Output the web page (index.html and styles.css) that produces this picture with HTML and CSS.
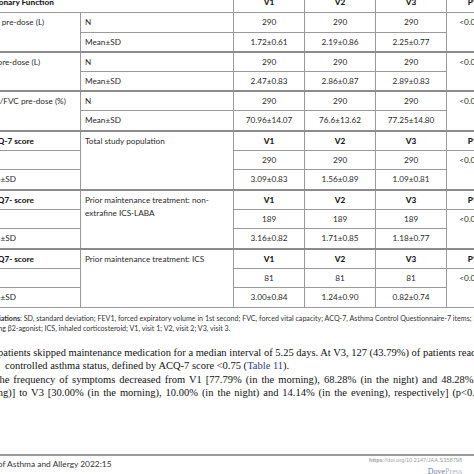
FILE: index.html
```html
<!DOCTYPE html>
<html>
<head>
<meta charset="utf-8">
<link rel="stylesheet" href="styles.css">
</head>
<body>
<div class="page">
  <table class="data">
    <colgroup>
      <col class="c1"><col class="c2"><col class="cv"><col class="cv"><col class="cv"><col class="cp">
    </colgroup>
    <tr class="head">
      <th colspan="2" class="left">Pulmonary Function</th><th>V1</th><th>V2</th><th>V3</th><th>P*</th>
    </tr>
    <tr>
      <td rowspan="2" class="left">FEV1 pre-dose (L)</td><td class="left">N</td><td>290</td><td>290</td><td>290</td><td rowspan="2">&lt;0.001</td>
    </tr>
    <tr>
      <td class="left">Mean±SD</td><td>1.72±0.61</td><td>2.19±0.86</td><td>2.25±0.77</td>
    </tr>
    <tr class="sec">
      <td rowspan="2" class="left">FVC pre-dose (L)</td><td class="left">N</td><td>290</td><td>290</td><td>290</td><td rowspan="2">&lt;0.001</td>
    </tr>
    <tr>
      <td class="left">Mean±SD</td><td>2.47±0.83</td><td>2.86±0.87</td><td>2.89±0.83</td>
    </tr>
    <tr class="sec">
      <td rowspan="2" class="left">FEV1/FVC pre-dose (%)</td><td class="left">N</td><td>290</td><td>290</td><td>290</td><td rowspan="2">&lt;0.001</td>
    </tr>
    <tr>
      <td class="left">Mean±SD</td><td>70.96±14.07</td><td>76.6±13.62</td><td>77.25±14.80</td>
    </tr>
    <tr class="sec">
      <th class="left ind">ACQ-7 score</th><td rowspan="3" class="left">Total study population</td><th>V1</th><th>V2</th><th>V3</th><th>P*</th>
    </tr>
    <tr>
      <td class="left">N</td><td>290</td><td>290</td><td>290</td><td rowspan="2">&lt;0.001</td>
    </tr>
    <tr>
      <td class="left">Mean±SD</td><td>3.09±0.83</td><td>1.56±0.89</td><td>1.09±0.81</td>
    </tr>
    <tr class="sec">
      <th class="left ind">ACQ7- score</th><td rowspan="3" class="left">Prior maintenance treatment: non-<br>extrafine ICS-LABA</td><th>V1</th><th>V2</th><th>V3</th><th>P*</th>
    </tr>
    <tr>
      <td class="left">N</td><td>189</td><td>189</td><td>189</td><td rowspan="2">&lt;0.001</td>
    </tr>
    <tr>
      <td class="left">Mean±SD</td><td>3.16±0.82</td><td>1.71±0.85</td><td>1.18±0.77</td>
    </tr>
    <tr class="sec">
      <th class="left ind">ACQ7- score</th><td rowspan="3" class="left">Prior maintenance treatment: ICS</td><th>V1</th><th>V2</th><th>V3</th><th>P*</th>
    </tr>
    <tr>
      <td class="left">N</td><td>81</td><td>81</td><td>81</td><td rowspan="2">&lt;0.001</td>
    </tr>
    <tr>
      <td class="left">Mean±SD</td><td>3.00±0.84</td><td>1.24±0.90</td><td>0.82±0.74</td>
    </tr>
  </table>

  <div class="abbr">
    <div class="aline"><b>Abbreviations</b>: SD, standard deviation; FEV1, forced expiratory volume in 1st second; FVC, forced vital capacity; ACQ-7, Asthma Control Questionnaire-7 items; LABA, long-</div>
    <div class="aline l2">acting β2-agonist; ICS, inhaled corticosteroid; V1, visit 1; V2, visit 2; V3, visit 3.</div>
  </div>

  <div class="para">
    <div class="pl p1">patients skipped maintenance medication for a median interval of 5.25 days. At V3, 127 (43.79%) of patients reached</div>
    <div class="pl p2">controlled asthma status, defined by ACQ-7 score &lt;0.75 (<span class="link">Table 11</span>).</div>
    <div class="pl p3">The frequency of symptoms decreased from V1 [77.79% (in the morning), 68.28% (in the night) and 48.28% (in the</div>
    <div class="pl p4">evening)] to V3 [30.00% (in the morning), 10.00% (in the night) and 14.14% (in the evening), respectively] (p&lt;0.001).</div>
  </div>
</div>

<div class="footer">
  <div class="journal">Journal of Asthma and Allergy 2022:15</div>
  <div class="fright">
    <div class="doi"><b>https</b>://doi.org/10.2147/JAA.S358798</div>
    <div class="dove"><span class="dv">Dove</span><span class="pr">Press</span></div>
  </div>
</div>
</body>
</html>
```
FILE: styles.css
```css
html, body {
  margin: 0;
  padding: 0;
  background: #fff;
}
body {
  width: 474px;
  height: 474px;
  overflow: hidden;
}
.page {
  margin-left: -25px;
  width: 530px;
}
.data {
  border-collapse: collapse;
  table-layout: fixed;
  width: 522px;
  margin-top: -7px;
  font-family: Lato, "Liberation Sans", sans-serif;
  font-size: 8.2px;
  color: #2a2a2a;
}
.c1 { width: 105px; }
.c2 { width: 153px; }
.cv { width: 71px; }
.cp { width: 51px; }
.data tr {
  height: 19.67px;
}
.data td, .data th {
  border: 1px solid #9a9a9a;
  padding: 3px 2px 2px 2px;
  line-height: 13px;
  vertical-align: top;
  text-align: center;
  white-space: nowrap;
  overflow: hidden;
}
.data th {
  font-weight: 900;
  color: #1a1a1a;
}
.data .left {
  text-align: left;
  padding-left: 4px;
}
.data .ind { padding-left: 11px; }
.data tr.head th {
  border-top: none;
}
.data tr.sec td, .data tr.sec th {
  border-top: 2px solid #8c8c8c;
}
.abbr {
  margin-top: 6px;
  font-family: Lato, "Liberation Sans", sans-serif;
  font-size: 7.1px;
  line-height: 10px;
  color: #333;
  white-space: nowrap;
}
.aline { padding-left: 1px; }
.aline.l2 { padding-left: 12px; }
.para {
  margin-top: 12px;
  font-family: "Liberation Serif", "Times New Roman", serif;
  font-size: 10.5px;
  line-height: 13.4px;
  color: #111;
  white-space: nowrap;
}
.pl.p1 { padding-left: 23px; }
.pl.p2 { padding-left: 30px; }
.pl.p3 { padding-left: 18px; word-spacing: 1.4px; }
.pl.p4 { padding-left: 0px; word-spacing: 1.3px; }
.link { color: #2c3a8c; }
.footer {
  margin-top: 54px;
  border-top: 2px solid #9a9a9a;
  display: flex;
  justify-content: space-between;
  align-items: flex-start;
  padding-right: 12px;
}
.journal {
  margin-left: -31px;
  margin-top: 3px;
  font-family: Lato, "Liberation Sans", sans-serif;
  font-size: 8.4px;
  line-height: 10px;
  color: #333;
  white-space: nowrap;
}
.fright {
  display: flex;
  flex-direction: column;
  align-items: flex-end;
}
.doi {
  margin-top: 1px;
  font-family: "Liberation Sans", Arial, sans-serif;
  font-size: 5.6px;
  line-height: 6px;
  color: #a0a0a0;
}
.dove {
  margin-top: 4px;
  font-family: "Liberation Serif", serif;
  font-size: 8px;
  line-height: 9px;
  color: #6e7fa8;
}
.dove .pr { color: #a9b3cb; }
```
